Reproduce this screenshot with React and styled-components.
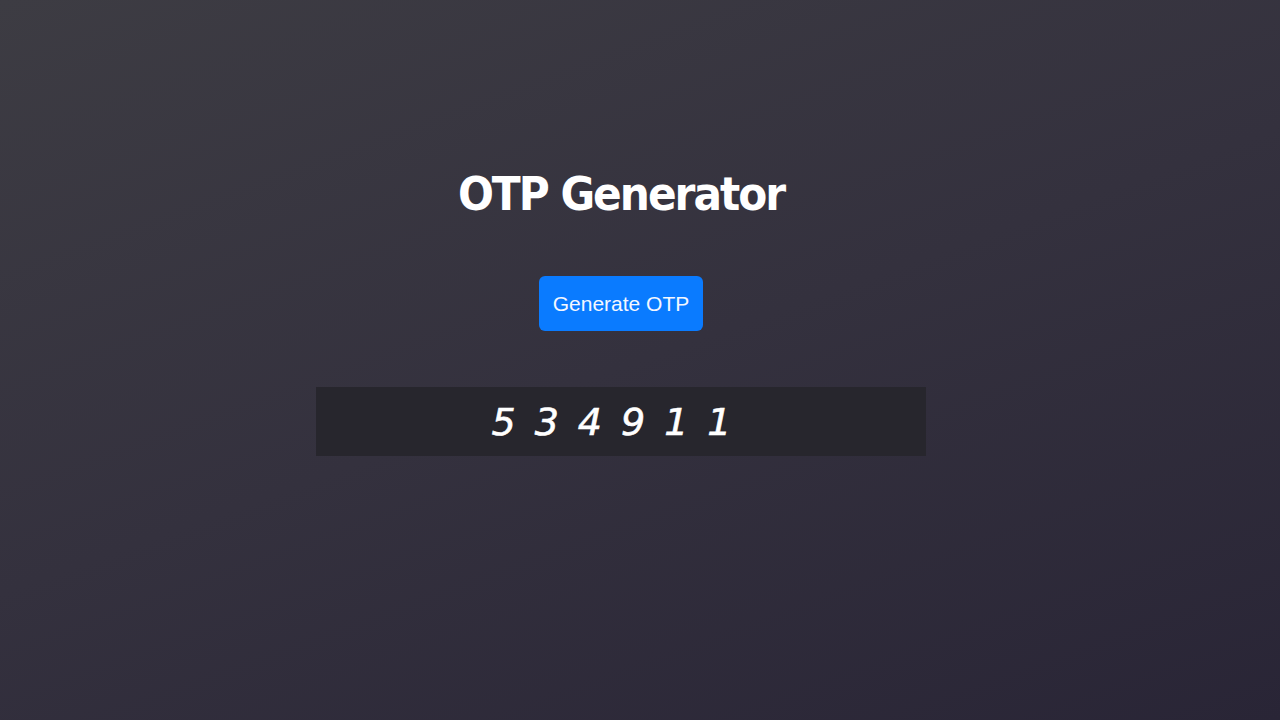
import React, { useState } from 'react';
import styled, { createGlobalStyle } from 'styled-components';

const GlobalStyle = createGlobalStyle`
  html, body {
    margin: 0;
    padding: 0;
  }
  body {
    font-family: "Liberation Sans", Arial, sans-serif;
  }
`

const Page = styled.main`
  min-height: 100vh;
  box-sizing: border-box;
  background: linear-gradient(160deg, #3d3c43 0%, #34313e 50%, #292536 100%);
  display: flex;
  flex-direction: column;
  align-items: center;
  padding: 165px 38px 0 0;
`

const Title = styled.h1`
  margin: 0;
  font-family: "DejaVu Sans Condensed", "DejaVu Sans", Verdana, sans-serif;
  font-stretch: condensed;
  font-weight: bold;
  font-size: 47px;
  line-height: 58px;
  letter-spacing: -2px;
  color: #ffffff;
`

const GenerateButton = styled.button`
  margin-top: 53px;
  height: 55px;
  padding: 0 14px;
  border: none;
  border-radius: 6px;
  background: #0a7bff;
  color: #f4f7ff;
  font-family: "Liberation Sans", Arial, sans-serif;
  font-size: 21px;
  cursor: pointer;
`

const OtpBox = styled.div`
  margin-top: 56px;
  width: 610px;
  height: 69px;
  background: #27262d;
  display: flex;
  align-items: center;
  justify-content: center;
`

const OtpDigits = styled.span`
  font-family: "DejaVu Sans", Verdana, sans-serif;
  font-style: italic;
  font-size: 38px;
  letter-spacing: 19px;
  color: #ffffff;
  -webkit-text-stroke: 0.6px #ffffff;
`

const makeOtp = () =>
  Array.from({ length: 6 }, () => Math.floor(Math.random() * 10)).join('')

export default function App() {
  const [otp, setOtp] = useState('534911')

  return (
    <>
      <GlobalStyle />
      <Page>
        <Title>OTP Generator</Title>
        <GenerateButton onClick={() => setOtp(makeOtp())}>Generate OTP</GenerateButton>
        <OtpBox>
          <OtpDigits>{otp}</OtpDigits>
        </OtpBox>
      </Page>
    </>
  )
}
